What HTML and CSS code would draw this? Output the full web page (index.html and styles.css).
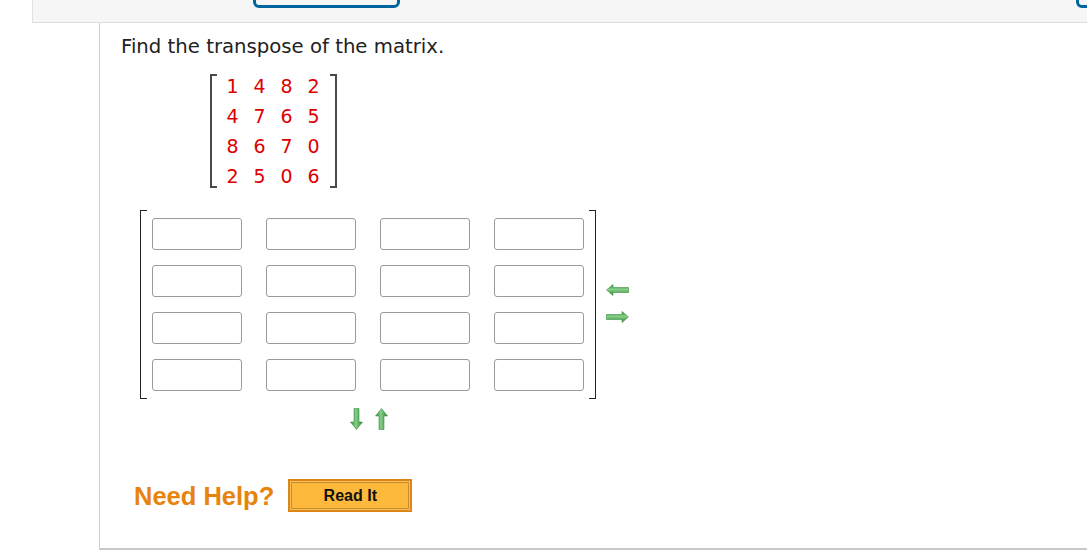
FILE: index.html
```html
<!DOCTYPE html>
<html>
<head>
<meta charset="utf-8">
<link rel="stylesheet" href="styles.css">
</head>
<body>
<div class="topbar">
  <div class="tb-btn"></div>
  <div class="tb-btn tb-btn2"></div>
</div>
<div class="content">
  <p class="question">Find the transpose of the matrix.</p>
  <div class="mat">
    <div class="brk brk-l"></div>
    <div class="nums">
      <span>1</span><span>4</span><span>8</span><span>2</span>
      <span>4</span><span>7</span><span>6</span><span>5</span>
      <span>8</span><span>6</span><span>7</span><span>0</span>
      <span>2</span><span>5</span><span>0</span><span>6</span>
    </div>
    <div class="brk brk-r"></div>
  </div>

  <div class="answer">
    <div class="ans-col">
      <div class="imat">
        <div class="ibrk ibrk-l"></div>
        <div class="inputs">
          <input type="text"><input type="text"><input type="text"><input type="text">
          <input type="text"><input type="text"><input type="text"><input type="text">
          <input type="text"><input type="text"><input type="text"><input type="text">
          <input type="text"><input type="text"><input type="text"><input type="text">
        </div>
        <div class="ibrk ibrk-r"></div>
      </div>
      <div class="vert-arrows">
        <svg width="13" height="22" viewBox="0 0 13 22">
          <defs><linearGradient id="gv" x1="0" y1="0" x2="1" y2="0"><stop offset="0" stop-color="#2f8a37"/><stop offset="0.45" stop-color="#86cf89"/><stop offset="1" stop-color="#2c8233"/></linearGradient></defs>
          <path d="M4 0.5 H9 V14 H12.5 L6.5 21.5 L0.5 14 H4 Z" fill="url(#gv)" stroke="#3f9447" stroke-width="0.6"/>
        </svg>
        <svg width="13" height="22" viewBox="0 0 13 22">
          <path d="M4 21.5 H9 V8 H12.5 L6.5 0.5 L0.5 8 H4 Z" fill="url(#gv)" stroke="#3f9447" stroke-width="0.6"/>
        </svg>
      </div>
    </div>
    <div class="horiz-arrows">
      <svg width="23" height="12" viewBox="0 0 23 12">
        <defs><linearGradient id="gh" x1="0" y1="0" x2="0" y2="1"><stop offset="0" stop-color="#2f8a37"/><stop offset="0.45" stop-color="#86cf89"/><stop offset="1" stop-color="#2c8233"/></linearGradient></defs>
        <path d="M0.5 6 L7 0.5 V3.5 H22.5 V8.5 H7 V11.5 Z" fill="url(#gh)" stroke="#3f9447" stroke-width="0.6"/>
      </svg>
      <svg width="23" height="12" viewBox="0 0 23 12">
        <path d="M22.5 6 L16 0.5 V3.5 H0.5 V8.5 H16 V11.5 Z" fill="url(#gh)" stroke="#3f9447" stroke-width="0.6"/>
      </svg>
    </div>
  </div>

  <div class="help">
    <span class="need">Need Help?</span>
    <button class="readit">Read It</button>
  </div>
</div>
</body>
</html>
```
FILE: styles.css
```css
html, body {
  margin: 0;
  padding: 0;
  background: #ffffff;
  overflow: hidden;
}
body {
  width: 1087px;
  height: 555px;
  font-family: "DejaVu Sans", Verdana, sans-serif;
}
.topbar {
  margin-left: 32px;
  height: 22px;
  background: #f6f6f6;
  border-left: 1px solid #e2e2e2;
  border-bottom: 1px solid #dcdcdc;
  overflow: hidden;
  display: flex;
  align-items: flex-end;
}
.tb-btn {
  margin-left: 220px;
  margin-bottom: 14px;
  width: 141px;
  height: 30px;
  flex: none;
  border: 3px solid #00659c;
  border-radius: 6px;
  box-sizing: content-box;
}
.tb-btn2 {
  margin-left: 676px;
}
.content {
  margin-left: 99px;
  height: 525px;
  border-left: 1px solid #cfcfcf;
  border-bottom: 2px solid #c8c8c8;
  padding-left: 21px;
  box-sizing: content-box;
  overflow: hidden;
}
.question {
  margin: 13px 0 0 0;
  font-size: 19.7px;
  line-height: 22px;
  color: #222;
}
.mat {
  display: flex;
  align-items: center;
  margin: 13px 0 0 89px;
  height: 120px;
}
.brk {
  width: 5px;
  height: 110px;
  border: 2px solid #4a4a4a;
}
.brk-l { border-right: none; }
.brk-r { border-left: none; }
.nums {
  display: grid;
  grid-template-columns: repeat(4, 27px);
  grid-auto-rows: 29.7px;
  padding: 0 3px 0 2px;
  color: #dd0000;
  font-size: 19px;
  text-align: center;
  align-items: center;
}
.answer {
  display: flex;
  align-items: flex-start;
  margin: 19px 0 0 19px;
}
.ans-col {
  display: flex;
  flex-direction: column;
  align-items: center;
}
.imat {
  display: flex;
}
.ibrk {
  width: 6px;
  border: 1px solid #222;
}
.ibrk-l { border-right: none; }
.ibrk-r { border-left: none; }
.inputs {
  display: grid;
  grid-template-columns: repeat(4, 90px);
  grid-auto-rows: 32px;
  column-gap: 24px;
  row-gap: 15px;
  padding: 8px 5px;
}
.inputs input {
  margin: 0;
  padding: 0;
  width: 90px;
  height: 32px;
  box-sizing: border-box;
  border: 1px solid #9a9a9e;
  border-radius: 3px;
  background: #fff;
}
.vert-arrows {
  display: flex;
  gap: 12px;
  margin-top: 9px;
  padding-left: 1px;
}
.horiz-arrows {
  display: flex;
  flex-direction: column;
  gap: 15px;
  margin: 74px 0 0 10px;
}
.help {
  display: flex;
  align-items: center;
  margin: 49px 0 0 13px;
}
.need {
  font-family: "Liberation Sans", Arial, sans-serif;
  font-weight: bold;
  font-size: 25.5px;
  color: #e8830c;
  line-height: 32px;
}
.readit {
  margin-left: 14px;
  width: 124px;
  height: 33px;
  padding: 0;
  font-family: "Liberation Sans", Arial, sans-serif;
  font-weight: bold;
  font-size: 16px;
  color: #111;
  background: #fdb93c;
  border: 2px solid #de8518;
  box-shadow: inset 0 0 0 1px #f7c25e, inset 0 0 0 2px #c9892c;
}
```
